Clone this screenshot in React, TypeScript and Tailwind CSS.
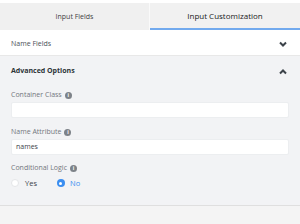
import React from "react";

function Info() {
  return (
    <span className="inline-flex items-center justify-center w-[7px] h-[7px] rounded-full bg-[#7d8288] text-white text-[5px] font-bold leading-none ml-[3px]">
      i
    </span>
  );
}

function ChevronDown() {
  return (
    <svg width="8" height="6" viewBox="0 0 8 6">
      <path d="M1 1.5 L4 4.5 L7 1.5" stroke="#3c434a" strokeWidth="2" fill="none" />
    </svg>
  );
}

function ChevronUp() {
  return (
    <svg width="8" height="6" viewBox="0 0 8 6">
      <path d="M1 4.5 L4 1.5 L7 4.5" stroke="#3c434a" strokeWidth="2" fill="none" />
    </svg>
  );
}

export default function App() {
  return (
    <div className="w-[300px] h-[224px] bg-[#f4f4f4] flex flex-col" style={{ fontFamily: '"Open Sans", sans-serif' }}>
      <div className="h-[3px] bg-white" />
      <div className="flex h-[27px]">
        <div className="w-[150px] bg-[#f0f0f0] flex items-center justify-center pt-[1px] text-[7px] text-[#3f3f3f] border-r border-[#fafafa]">
          Input Fields
        </div>
        <div className="flex-1 bg-[#f1f1f1] flex items-center justify-center pt-[1px] text-[8px] text-[#1a1a1a] border-b-2 border-[#72aaee]">
          Input Customization
        </div>
      </div>
      <div className="h-[26px] bg-white flex items-center justify-between pl-[11px] pr-[13px] border-b border-[#e8e8e8]">
        <span className="text-[7px] text-[#4a5057] pt-[3px]">Name Fields</span>
        <span className="pt-[2px]"><ChevronDown /></span>
      </div>
      <div className="h-[150px] bg-[#f2f3f5] border-b border-[#dfdfdf] flex flex-col px-[11px]">
        <div className="flex items-center justify-between h-[28px] pr-[2px] pt-[3px]">
          <span className="text-[7px] font-bold text-[#2c3338]">Advanced Options</span>
          <ChevronUp />
        </div>
        <div className="mt-[4px] text-[7px] text-[#72777d] flex items-center h-[14px] pt-[1px]">
          Container Class <Info />
        </div>
        <div className="h-[16px] bg-white rounded-[2px] border border-[#eceef0]" />
        <div className="mt-[7px] text-[7px] text-[#72777d] flex items-center h-[14px] pt-[1px]">
          Name Attribute <Info />
        </div>
        <div className="h-[16px] bg-white rounded-[2px] border border-[#eceef0] flex items-center pl-[4px] pt-[1px] text-[7px] text-[#3c434a]">
          names
        </div>
        <div className="mt-[6px] text-[7px] text-[#72777d] flex items-center h-[14px] pt-[1px]">
          Conditional Logic <Info />
        </div>
        <div className="mt-[1px] flex items-center h-[14px] text-[7.5px]">
          <span className="w-[8px] h-[8px] rounded-full bg-white border border-[#e4e6e8]" />
          <span className="ml-[6px] text-[#3c434a] pt-[1px]">Yes</span>
          <span className="ml-[20px] w-[8px] h-[8px] rounded-full bg-[#3b8ef0] flex items-center justify-center">
            <span className="w-[3px] h-[3px] rounded-full bg-white" />
          </span>
          <span className="ml-[5px] text-[#3b8ef0] pt-[1px]">No</span>
        </div>
      </div>
    </div>
  );
}
